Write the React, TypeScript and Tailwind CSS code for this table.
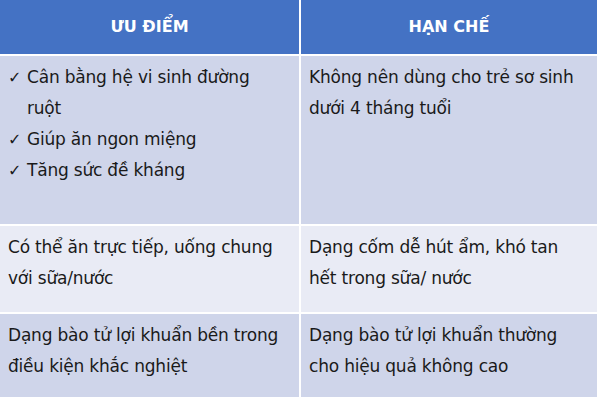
import React from 'react';

const LEFT = 'bg-[#cfd5ea]';
const LIGHT = 'bg-[#e9ebf5]';

const PROS = ['Cân bằng hệ vi sinh đường ruột', 'Giúp ăn ngon miệng', 'Tăng sức đề kháng'];

function Cell({ children, tone }: { children: React.ReactNode; tone: string }) {
  return (
    <div className={`${tone} px-2 pt-[6px] text-[17px] leading-[31px] tracking-[-0.2px] text-[#1a1a1a]`}>
      {children}
    </div>
  );
}

export default function App() {
  return (
    <div className="w-[600px] h-[400px] bg-white" style={{ fontFamily: '"DejaVu Sans", sans-serif' }}>
      <div className="grid grid-cols-[299px_296px] grid-rows-[54px_168px_86px_83px] gap-[2px]">
        <div className="bg-[#4472c4] flex items-center justify-center text-white font-bold text-[16px]">
          ƯU ĐIỂM
        </div>
        <div className="bg-[#4472c4] flex items-center justify-center text-white font-bold text-[16px]">
          HẠN CHẾ
        </div>

        <Cell tone={LEFT}>
          <div className="pr-[24px]">
            {PROS.map((p) => (
              <div key={p} className="flex">
                <span className="w-[19px] shrink-0 text-[16px] font-bold">✓</span>
                <span>{p}</span>
              </div>
            ))}
          </div>
        </Cell>
        <Cell tone={LEFT}>Không nên dùng cho trẻ sơ sinh dưới 4 tháng tuổi</Cell>

        <Cell tone={LIGHT}>Có thể ăn trực tiếp, uống chung với sữa/nước</Cell>
        <Cell tone={LIGHT}>Dạng cốm dễ hút ẩm, khó tan hết trong sữa/ nước</Cell>

        <Cell tone={LEFT}>Dạng bào tử lợi khuẩn bền trong điều kiện khắc nghiệt</Cell>
        <Cell tone={LEFT}>Dạng bào tử lợi khuẩn thường cho hiệu quả không cao</Cell>
      </div>
    </div>
  );
}
